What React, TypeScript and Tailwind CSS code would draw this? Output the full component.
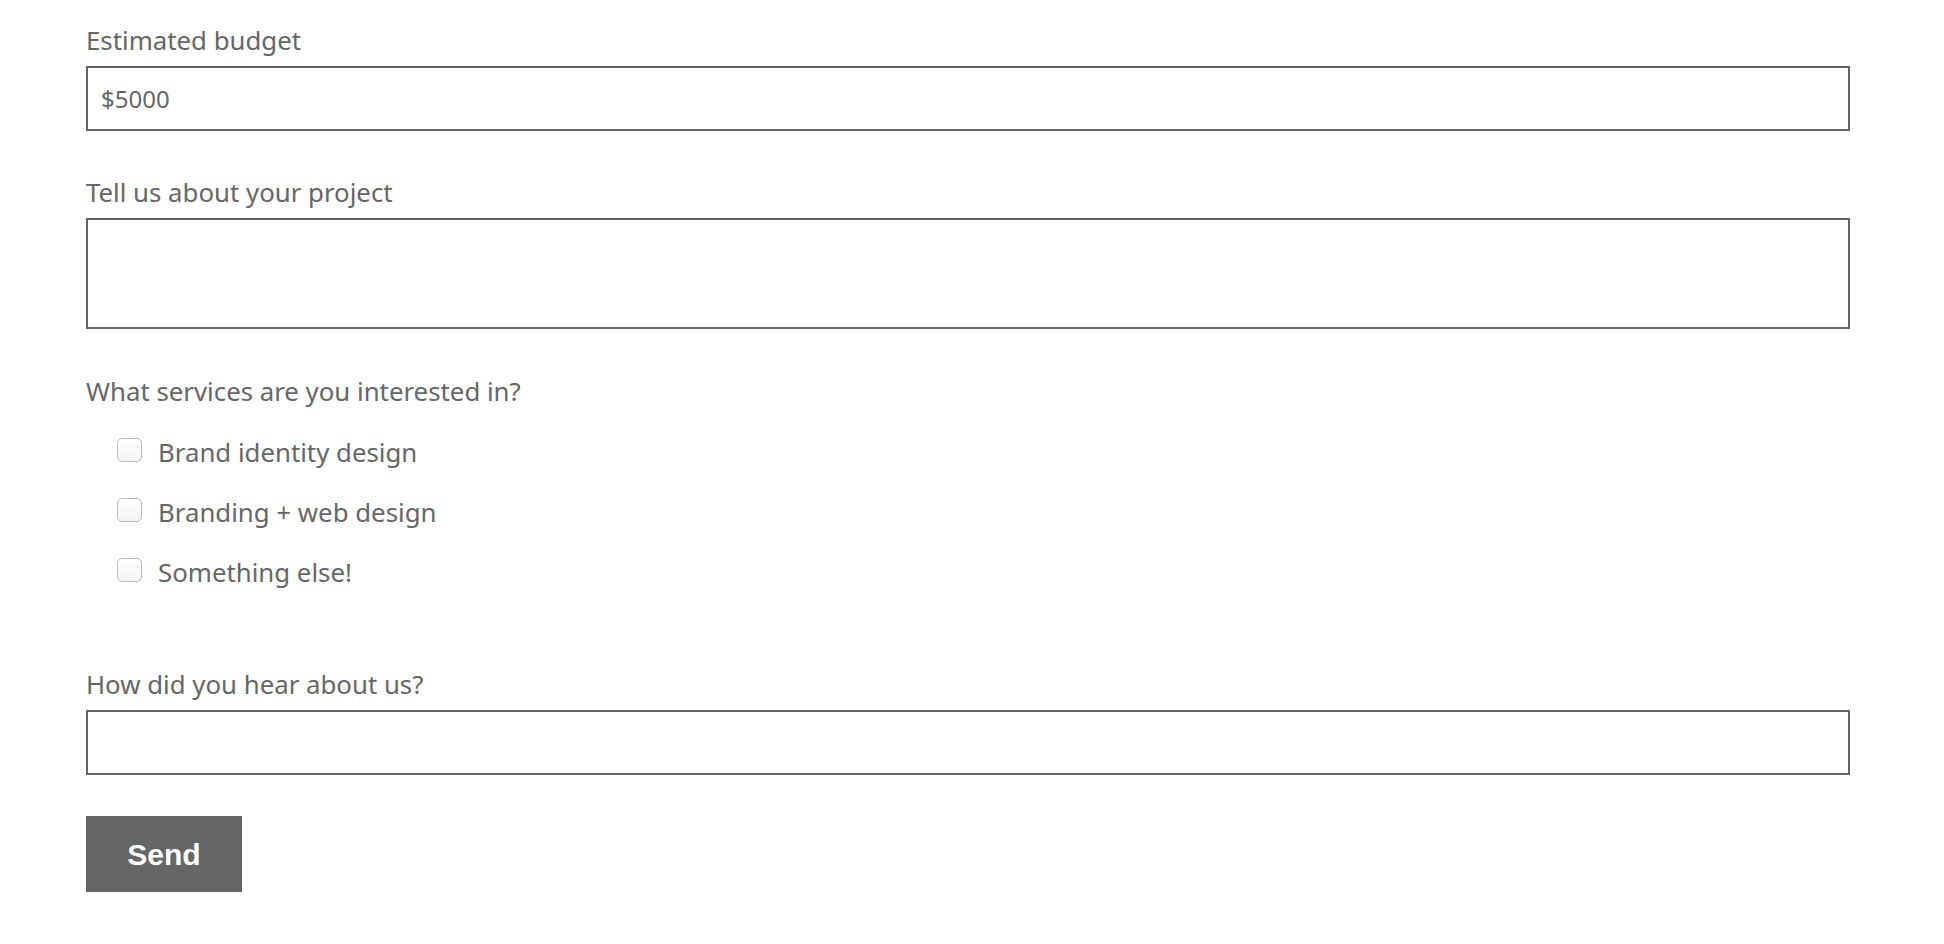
const labelCls = "block text-[25.8px] leading-[36px] text-[#666]";
const boxCls = "block w-full border-2 border-[#666] bg-white";

const services = ["Brand identity design", "Branding + web design", "Something else!"];

export default function App() {
  return (
    <div className="min-h-screen bg-white font-['Noto_Sans',sans-serif] text-[#666]">
      <form className="w-[1764px] pl-[86px] pt-[22px] box-content" onSubmit={(e) => e.preventDefault()}>
        <label className={labelCls}>Estimated budget</label>
        <input
          type="text"
          defaultValue="$5000"
          className={`${boxCls} mt-[8px] h-[65px] px-[13px] text-[24px] text-[#666] outline-none`}
        />

        <label className={`${labelCls} mt-[43px]`}>Tell us about your project</label>
        <textarea className={`${boxCls} mt-[8px] h-[111px] resize-none outline-none`} />

        <div className={`${labelCls} mt-[44px]`}>What services are you interested in?</div>
        <div className="mt-[25px] flex flex-col gap-[24px] pl-[31px]">
          {services.map((s) => (
            <label key={s} className="flex items-start gap-[16px] text-[25.8px] leading-[36px]">
              <span className="mt-[4px] h-[24px] w-[25px] rounded-[5px] border border-[#b8b8b8] bg-gradient-to-b from-white to-[#f3f3f3]" />
              <span>{s}</span>
            </label>
          ))}
        </div>

        <label className={`${labelCls} mt-[76px]`}>How did you hear about us?</label>
        <input type="text" className={`${boxCls} mt-[8px] h-[65px] px-[13px] text-[24px] outline-none`} />

        <button
          type="submit"
          className="mt-[41px] h-[76px] w-[156px] bg-[#666] font-['Liberation_Sans',Arial,sans-serif] text-[30px] font-bold text-white"
        >
          Send
        </button>
      </form>
    </div>
  );
}
